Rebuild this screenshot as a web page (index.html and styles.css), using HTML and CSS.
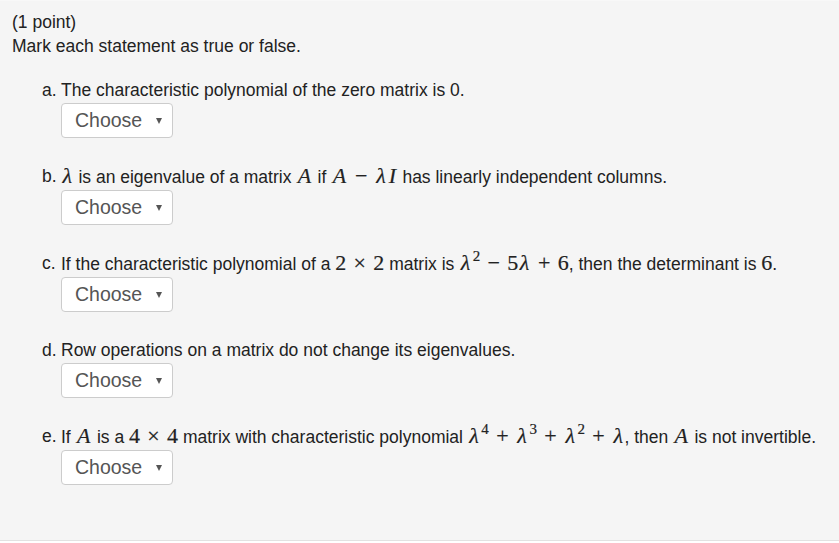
FILE: index.html
```html
<!DOCTYPE html>
<html>
<head>
<meta charset="utf-8">
<link rel="stylesheet" href="styles.css">
</head>
<body>
<div class="problem">
  <div class="line">(1 point)</div>
  <div class="line">Mark each statement as true or false.</div>
  <div class="items">
    <div class="item">
      <span class="label">a.</span>
      <div class="body">
        <div class="stmt">The characteristic polynomial of the zero matrix is 0.</div>
        <div class="select"><span class="choose">Choose</span><span class="caret"></span></div>
      </div>
    </div>
    <div class="item">
      <span class="label">b.</span>
      <div class="body">
        <div class="stmt"><span class="m"><i>λ</i></span> is an eigenvalue of a matrix <span class="m"><i>A</i></span> if <span class="m"><i>A</i><span class="op">−</span><i>λ</i><i>I</i></span> has linearly independent columns.</div>
        <div class="select"><span class="choose">Choose</span><span class="caret"></span></div>
      </div>
    </div>
    <div class="item">
      <span class="label">c.</span>
      <div class="body">
        <div class="stmt">If the characteristic polynomial of a <span class="m">2<span class="op">×</span>2</span> matrix is <span class="m"><i>λ</i><sup>2</sup><span class="op">−</span>5<i>λ</i><span class="op">+</span>6</span>, then the determinant is <span class="m">6</span>.</div>
        <div class="select"><span class="choose">Choose</span><span class="caret"></span></div>
      </div>
    </div>
    <div class="item">
      <span class="label">d.</span>
      <div class="body">
        <div class="stmt">Row operations on a matrix do not change its eigenvalues.</div>
        <div class="select"><span class="choose">Choose</span><span class="caret"></span></div>
      </div>
    </div>
    <div class="item">
      <span class="label">e.</span>
      <div class="body">
        <div class="stmt">If <span class="m"><i>A</i></span> is a <span class="m">4<span class="op">×</span>4</span> matrix with characteristic polynomial <span class="m"><i>λ</i><sup>4</sup><span class="op">+</span><i>λ</i><sup>3</sup><span class="op">+</span><i>λ</i><sup>2</sup><span class="op">+</span><i>λ</i></span>, then <span class="m"><i>A</i></span> is not invertible.</div>
        <div class="select"><span class="choose">Choose</span><span class="caret"></span></div>
      </div>
    </div>
  </div>
</div>
</body>
</html>
```
FILE: styles.css
```css
html, body {
  margin: 0;
  padding: 0;
  background: #ffffff;
}
.problem {
  box-sizing: border-box;
  height: 541px;
  background: #f5f5f5;
  border-top: 1px solid #f8f8f8;
  border-bottom: 1px solid #e2e2e2;
  padding: 9px 12px 0 12px;
  font-family: "Liberation Sans", Arial, sans-serif;
  font-size: 17.5px;
  line-height: 24px;
  color: #222;
}
.items {
  margin-top: 20px;
  padding-left: 30px;
}
.item {
  display: flex;
  margin-bottom: 26px;
}
.label {
  width: 19px;
  flex: none;
}
.body {
  display: flex;
  flex-direction: column;
  align-items: flex-start;
}
.stmt {
  white-space: nowrap;
}
.m {
  font-family: "Liberation Serif", "Times New Roman", serif;
  font-size: 22px;
  -webkit-text-stroke: 0.2px #222;
}
.m i {
  font-style: italic;
  padding: 0 1.5px;
}
.m sup {
  font-size: 15px;
  line-height: 0;
  vertical-align: 9px;
  margin-left: 1px;
}
.op {
  display: inline-block;
  width: 17px;
  text-align: center;
  margin: 0 5px;
}
.select {
  box-sizing: border-box;
  margin-top: 1px;
  width: 112px;
  height: 35px;
  background: #fff;
  border: 1px solid #cccccc;
  border-radius: 4px;
  display: flex;
  align-items: center;
  padding-left: 13px;
  color: #555;
}
.choose {
  font-size: 19.5px;
  line-height: 33px;
}
.caret {
  width: 0;
  height: 0;
  margin-left: 14px;
  margin-top: 1px;
  border-left: 3px solid transparent;
  border-right: 3px solid transparent;
  border-top: 6px solid #555;
}
```
